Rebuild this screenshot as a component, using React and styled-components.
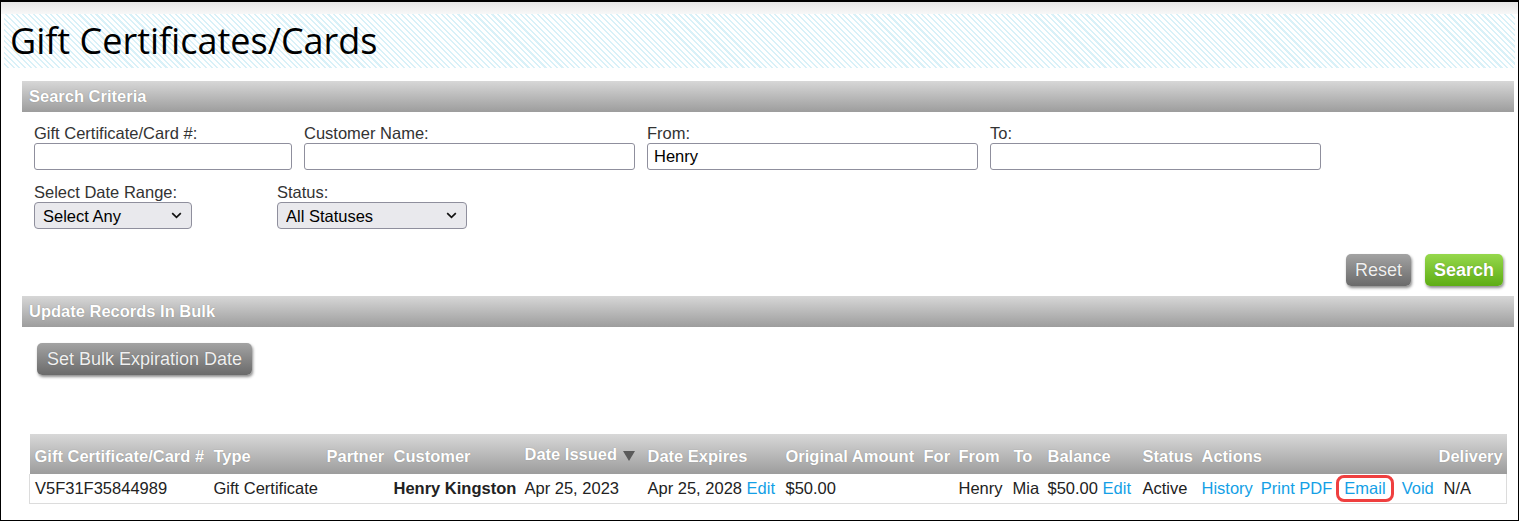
import React from "react";
import styled, { createGlobalStyle } from "styled-components";

const Global = createGlobalStyle`
  html, body { margin: 0; padding: 0; background: #fff; }
  body { font-family: "Liberation Sans", Arial, sans-serif; }
  * { box-sizing: border-box; }
`;

const Frame = styled.div`
  width: 1519px;
  height: 521px;
  border: 1px solid #000;
  border-top-width: 2px;
  overflow: hidden;
  background: #fff;
`;

const TopStrip = styled.div`
  height: 12px;
  background: linear-gradient(#e6e6e6, #f8f8f8);
`;

const TitleBand = styled.div`
  height: 54px;
  margin: 0 3px;
  padding-left: 6px;
  background: repeating-linear-gradient(
    45deg,
    #ffffff 0px,
    #ffffff 2.5px,
    #d9f1f8 2.5px,
    #d9f1f8 4px
  );
`;

const Title = styled.h1`
  margin: 0;
  font-family: "Open Sans", sans-serif;
  font-weight: 400;
  font-size: 36px;
  line-height: 54px;
  color: #000;
`;

const Content = styled.div`
  padding: 13px 4px 0 21px;
`;

const Bar = styled.div`
  height: 31px;
  padding-left: 7px;
  display: flex;
  align-items: center;
  background: linear-gradient(#d7d7d7, #9d9d9d);
  color: #fff;
  font-weight: 700;
  font-size: 16.5px;
  text-shadow: 0 0 1px rgba(0, 0, 0, 0.35);
`;

const Form = styled.div`
  padding: 12px 12px 0 12px;
  display: flex;
  flex-direction: column;
`;

const FieldRow = styled.div`
  display: flex;
  gap: ${(p) => p.$gap ?? 12}px;
  margin-bottom: ${(p) => p.$mb ?? 0}px;
`;

const Field = styled.div`
  display: flex;
  flex-direction: column;
  width: ${(p) => p.$w}px;
  flex: none;
`;

const Label = styled.label`
  display: block;
  font-size: 16.5px;
  line-height: 19px;
  color: #333;
`;

const Input = styled.input`
  width: 100%;
  height: 27px;
  border: 1px solid #8f8f9d;
  border-radius: 3px;
  padding: 0 6px;
  font-family: "Liberation Sans", Arial, sans-serif;
  font-size: 16.5px;
  color: #000;
  background: #fff;
`;

const SelectWrap = styled.div`
  position: relative;
  width: ${(p) => p.$w}px;
`;

const Select = styled.select`
  appearance: none;
  width: 100%;
  height: 27px;
  border: 1px solid #8f8f9d;
  border-radius: 4px;
  padding: 0 0 0 8px;
  background: #e9e9ed;
  font-family: "Liberation Sans", Arial, sans-serif;
  font-size: 16.5px;
  color: #000;
`;

const Chevron = styled.svg`
  position: absolute;
  right: 10px;
  top: 10px;
  pointer-events: none;
`;

const ButtonRow = styled.div`
  display: flex;
  justify-content: flex-end;
  gap: 14px;
  padding: 25px 11px 10px 0;
`;

const Btn = styled.button`
  height: 32px;
  padding: 0 ${(p) => p.$px ?? 9}px;
  border: none;
  border-radius: 5px;
  font-family: "Liberation Sans", Arial, sans-serif;
  font-size: 18px;
  font-weight: ${(p) => (p.$green ? 700 : 400)};
  color: ${(p) => (p.$green ? "#fff" : "#f0f0f0")};
  background: ${(p) =>
    p.$green
      ? "linear-gradient(#96d84c, #5ead14)"
      : "linear-gradient(#a3a3a3, #6a6a6a)"};
  box-shadow: 1px 2px 3px rgba(0, 0, 0, 0.45);
  text-shadow: 0 0 1px rgba(0, 0, 0, 0.3);
  cursor: pointer;
`;

const BulkArea = styled.div`
  padding: 16px 0 0 15px;
  height: 107px;
`;

const Table = styled.table`
  margin: 0 7px;
  width: 1477px;
  table-layout: fixed;
  border-collapse: collapse;
  font-size: 16.5px;
`;

const Th = styled.th`
  height: 40px;
  padding: 4px 0 0 5px;
  text-align: left;
  white-space: nowrap;
  color: #fff;
  font-weight: 700;
  text-shadow: 0 0 1px rgba(0, 0, 0, 0.3);
`;

const HeadRow = styled.tr`
  background: linear-gradient(#d8d8d8, #9c9c9c);
`;

const BodyRow = styled.tr`
  border: 1px solid #dcdcdc;
  border-top: none;
`;

const Td = styled.td`
  height: 29px;
  padding: 0 0 0 ${(p) => p.$pl ?? 5}px;
  white-space: nowrap;
  color: #222;
  font-weight: ${(p) => (p.$bold ? 700 : 400)};
`;

const Link = styled.a`
  color: #149fe6;
  text-decoration: none;
  cursor: pointer;
`;

const Actions = styled.div`
  display: flex;
  gap: 8px;
`;

const Highlight = styled(Link)`
  outline: 3px solid #ef3f3f;
  outline-offset: 1px;
  border-radius: 4px;
  padding: 0 4px;
  margin-right: 4px;
`;

const SortArrow = styled.span`
  display: inline-block;
  margin-left: 6px;
  width: 0;
  height: 0;
  border-left: 6.5px solid transparent;
  border-right: 6.5px solid transparent;
  border-top: 10px solid #5a5a5a;
  vertical-align: -1px;
`;

const RaisedText = styled.span`
  position: relative;
  top: -2px;
`;

const cols = [179, 113, 67, 131, 123, 138, 138, 35, 55, 34, 95, 59, 237, 73];

function ChevronIcon() {
  return (
    <Chevron width="11" height="7" viewBox="0 0 11 7">
      <path d="M1.2 1.2 L5.5 5.3 L9.8 1.2" fill="none" stroke="#111" strokeWidth="1.7" />
    </Chevron>
  );
}

export default function App() {
  return (
    <>
      <Global />
      <Frame>
        <TopStrip />
        <TitleBand>
          <Title>Gift Certificates/Cards</Title>
        </TitleBand>
        <Content>
          <Bar>Search Criteria</Bar>
          <Form>
            <FieldRow $mb={13}>
              <Field $w={258}>
                <Label>Gift Certificate/Card #:</Label>
                <Input />
              </Field>
              <Field $w={331}>
                <Label>Customer Name:</Label>
                <Input />
              </Field>
              <Field $w={331}>
                <Label>From:</Label>
                <Input defaultValue="Henry" />
              </Field>
              <Field $w={331}>
                <Label>To:</Label>
                <Input />
              </Field>
            </FieldRow>
            <FieldRow $gap={0}>
              <Field $w={243}>
                <Label>Select Date Range:</Label>
                <SelectWrap $w={158}>
                  <Select defaultValue="any">
                    <option value="any">Select Any</option>
                  </Select>
                  <ChevronIcon />
                </SelectWrap>
              </Field>
              <Field $w={190}>
                <Label>Status:</Label>
                <SelectWrap $w={190}>
                  <Select defaultValue="all">
                    <option value="all">All Statuses</option>
                  </Select>
                  <ChevronIcon />
                </SelectWrap>
              </Field>
            </FieldRow>
          </Form>
          <ButtonRow>
            <Btn $px={9}>Reset</Btn>
            <Btn $green $px={9}>Search</Btn>
          </ButtonRow>
          <Bar>Update Records In Bulk</Bar>
          <BulkArea>
            <Btn $px={10}>Set Bulk Expiration Date</Btn>
          </BulkArea>
          <Table>
            <colgroup>
              {cols.map((w, i) => (
                <col key={i} style={{ width: w }} />
              ))}
            </colgroup>
            <thead>
              <HeadRow>
                <Th>Gift Certificate/Card #</Th>
                <Th>Type</Th>
                <Th>Partner</Th>
                <Th>Customer</Th>
                <Th>
                  <RaisedText>
                    Date Issued<SortArrow />
                  </RaisedText>
                </Th>
                <Th>Date Expires</Th>
                <Th>Original Amount</Th>
                <Th>For</Th>
                <Th>From</Th>
                <Th>To</Th>
                <Th>Balance</Th>
                <Th>Status</Th>
                <Th>Actions</Th>
                <Th>Delivery</Th>
              </HeadRow>
            </thead>
            <tbody>
              <BodyRow>
                <Td>V5F31F35844989</Td>
                <Td>Gift Certificate</Td>
                <Td></Td>
                <Td $bold>Henry Kingston</Td>
                <Td>Apr 25, 2023</Td>
                <Td>
                  Apr 25, 2028 <Link>Edit</Link>
                </Td>
                <Td>$50.00</Td>
                <Td></Td>
                <Td>Henry</Td>
                <Td $pl={4}>Mia</Td>
                <Td>
                  $50.00 <Link>Edit</Link>
                </Td>
                <Td>Active</Td>
                <Td>
                  <Actions>
                    <Link>History</Link>
                    <Link>Print PDF</Link>
                    <Highlight>Email</Highlight>
                    <Link>Void</Link>
                  </Actions>
                </Td>
                <Td $pl={10}>N/A</Td>
              </BodyRow>
            </tbody>
          </Table>
        </Content>
      </Frame>
    </>
  );
}
